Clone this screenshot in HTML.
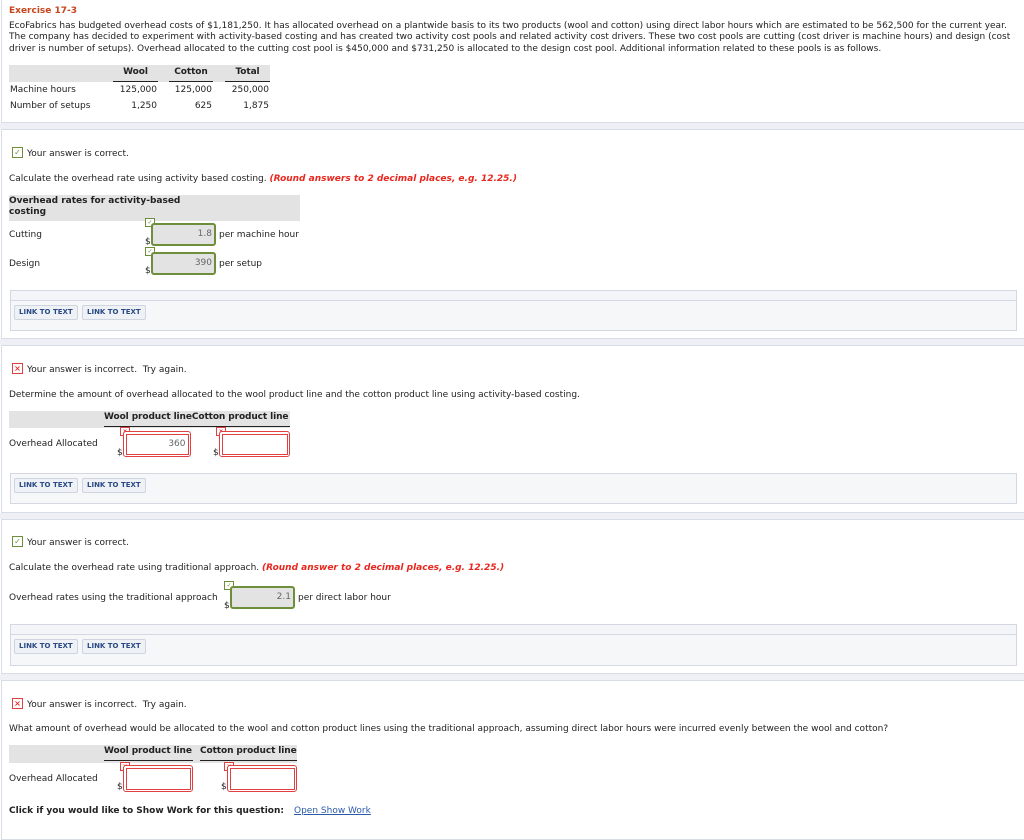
<!DOCTYPE html>
<html><head><meta charset="utf-8"><style>
*{margin:0;padding:0;box-sizing:border-box}
body{width:1024px;height:832px;background:#fff;position:relative;overflow:hidden;font-family:"DejaVu Sans","Liberation Sans",sans-serif;font-size:9px;color:#222}
.a{position:absolute;white-space:nowrap;margin-top:2px}
.panel{position:absolute;left:1px;width:1030px;border:1px solid #d8dce6;background:#fff}
.gap{position:absolute;left:0;width:1024px;background:#eef0f5}
.foot{position:absolute;left:10px;width:1007px;border:1px solid #d3d8e2;background:#f6f7f9}
.btn{position:absolute;height:15px;border:1px solid #cfd5df;border-radius:2px;background:#eef1f6;color:#2a4a85;font-weight:bold;font-size:7px;line-height:13px;padding:0 4px}
.b{font-weight:bold}
.hdr{position:absolute;background:#e3e3e3}
.ul{position:absolute;border-bottom:1.5px solid #222;font-weight:bold;white-space:nowrap;padding-top:2px;letter-spacing:-0.1px}
.gin{position:absolute;border:2px solid #6e8f3a;border-radius:3px;background:#e3e3e3;text-align:right;padding-right:2px;color:#666;line-height:19px}
.rin{position:absolute;border:1.5px solid #e04040;border-radius:3px;background:#fff;padding:1.5px}
.rin div{border:1px solid #e04040;width:100%;height:100%;text-align:right;padding-right:2px;color:#666;line-height:18px}
.ck{position:absolute;width:11px;height:11px;border:1px solid #6e8f3a;background:#fff;color:#6e8f3a;font-size:8px;line-height:9px;text-align:center}
.xk{position:absolute;width:11px;height:11px;border:1px solid #e04040;background:#fff;color:#e03030;font-size:8px;line-height:9px;text-align:center;font-weight:bold}
.red{color:#e8271e;font-weight:bold;font-style:italic}
</style></head><body>
<div class="panel" style="top:-1px;height:124px"></div>
<div class="gap" style="top:123px;height:6px"></div>
<div class="panel" style="top:129px;height:210px"></div>
<div class="gap" style="top:339px;height:6px"></div>
<div class="panel" style="top:345px;height:168px"></div>
<div class="gap" style="top:513px;height:6px"></div>
<div class="panel" style="top:519px;height:155px"></div>
<div class="gap" style="top:674px;height:6px"></div>
<div class="panel" style="top:680px;height:160px"></div>

<div class="a b" style="left:9px;top:4px;color:#c8441a;font-size:9px">Exercise 17-3</div>
<div class="a" style="left:9px;top:19px">EcoFabrics has budgeted overhead costs of $1,181,250. It has allocated overhead on a plantwide basis to its two products (wool and cotton) using direct labor hours which are estimated to be 562,500 for the current year.</div>
<div class="a" style="left:9px;top:30px">The company has decided to experiment with activity-based costing and has created two activity cost pools and related activity cost drivers. These two cost pools are cutting (cost driver is machine hours) and design (cost</div>
<div class="a" style="left:9px;top:42px">driver is number of setups). Overhead allocated to the cutting cost pool is $450,000 and $731,250 is allocated to the design cost pool. Additional information related to these pools is as follows.</div>

<div class="hdr" style="left:9px;top:65px;width:261px;height:17px"></div>
<div class="ul" style="left:113px;top:65px;width:45px;text-align:center;height:17px">Wool</div>
<div class="ul" style="left:169px;top:65px;width:44px;text-align:center;height:17px">Cotton</div>
<div class="ul" style="left:225px;top:65px;width:45px;text-align:center;height:17px">Total</div>
<div class="a" style="left:10px;top:83px">Machine hours</div>
<div class="a" style="left:113px;top:83px;width:44px;text-align:right">125,000</div>
<div class="a" style="left:169px;top:83px;width:43px;text-align:right">125,000</div>
<div class="a" style="left:225px;top:83px;width:44px;text-align:right">250,000</div>
<div class="a" style="left:10px;top:99px">Number of setups</div>
<div class="a" style="left:113px;top:99px;width:44px;text-align:right">1,250</div>
<div class="a" style="left:169px;top:99px;width:43px;text-align:right">625</div>
<div class="a" style="left:225px;top:99px;width:44px;text-align:right">1,875</div>

<!-- S2 -->
<div class="ck" style="left:12px;top:147px">✓</div>
<div class="a" style="left:27px;top:147px">Your answer is correct.</div>
<div class="a" style="left:9px;top:172px">Calculate the overhead rate using activity based costing. <span class="red">(Round answers to 2 decimal places, e.g. 12.25.)</span></div>
<div class="hdr" style="left:9px;top:195px;width:291px;height:26px"></div>
<div class="a b" style="left:9px;top:194px;line-height:11px">Overhead rates for activity-based<br>costing</div>
<div class="a" style="left:9px;top:228px">Cutting</div>
<div class="ck" style="left:145px;top:218px;width:10px;height:9px;font-size:6px;line-height:7px">✓</div>
<div class="a" style="left:145px;top:235px">$</div>
<div class="gin" style="left:151px;top:223px;width:65px;height:23px">1.8</div>
<div class="a" style="left:219px;top:228px">per machine hour</div>
<div class="a" style="left:9px;top:257px">Design</div>
<div class="ck" style="left:145px;top:247px;width:10px;height:9px;font-size:6px;line-height:7px">✓</div>
<div class="a" style="left:145px;top:264px">$</div>
<div class="gin" style="left:151px;top:252px;width:65px;height:23px">390</div>
<div class="a" style="left:219px;top:257px">per setup</div>
<div class="foot" style="top:290px;height:41px;border-top:1px solid #d3d8e2"><div style="height:10px;border-bottom:1px solid #d3d8e2;background:#f3f5f8"></div></div>
<div class="btn" style="left:14px;top:305px">LINK TO TEXT</div>
<div class="btn" style="left:82px;top:305px">LINK TO TEXT</div>

<!-- S3 -->
<div class="xk" style="left:12px;top:363px">×</div>
<div class="a" style="left:27px;top:363px">Your answer is incorrect.&nbsp; Try again.</div>
<div class="a" style="left:9px;top:388px">Determine the amount of overhead allocated to the wool product line and the cotton product line using activity-based costing.</div>
<div class="hdr" style="left:9px;top:411px;width:281px;height:17px"></div>
<div class="ul" style="left:104px;top:410px;width:186px;height:17px">Wool product lineCotton product line</div>
<div class="a" style="left:9px;top:437px">Overhead Allocated</div>
<div class="xk" style="left:120px;top:427px;width:10px;height:9px;font-size:6px;line-height:7px">×</div>
<div class="a" style="left:117px;top:446px">$</div>
<div class="rin" style="left:123px;top:431px;width:68px;height:26px"><div>360</div></div>
<div class="xk" style="left:216px;top:427px;width:10px;height:9px;font-size:6px;line-height:7px">×</div>
<div class="a" style="left:213px;top:446px">$</div>
<div class="rin" style="left:219px;top:431px;width:71px;height:26px"><div></div></div>
<div class="foot" style="top:473px;height:31px"></div>
<div class="btn" style="left:14px;top:478px">LINK TO TEXT</div>
<div class="btn" style="left:82px;top:478px">LINK TO TEXT</div>

<!-- S4 -->
<div class="ck" style="left:12px;top:536px">✓</div>
<div class="a" style="left:27px;top:536px">Your answer is correct.</div>
<div class="a" style="left:9px;top:561px">Calculate the overhead rate using traditional approach. <span class="red">(Round answer to 2 decimal places, e.g. 12.25.)</span></div>
<div class="a" style="left:9px;top:591px">Overhead rates using the traditional approach</div>
<div class="ck" style="left:224px;top:581px;width:10px;height:9px;font-size:6px;line-height:7px">✓</div>
<div class="a" style="left:224px;top:599px">$</div>
<div class="gin" style="left:230px;top:586px;width:65px;height:23px">2.1</div>
<div class="a" style="left:298px;top:591px">per direct labor hour</div>
<div class="foot" style="top:624px;height:42px"><div style="height:10px;border-bottom:1px solid #d3d8e2;background:#f3f5f8"></div></div>
<div class="btn" style="left:14px;top:639px">LINK TO TEXT</div>
<div class="btn" style="left:82px;top:639px">LINK TO TEXT</div>

<!-- S5 -->
<div class="xk" style="left:12px;top:698px">×</div>
<div class="a" style="left:27px;top:698px">Your answer is incorrect.&nbsp; Try again.</div>
<div class="a" style="left:9px;top:722px">What amount of overhead would be allocated to the wool and cotton product lines using the traditional approach, assuming direct labor hours were incurred evenly between the wool and cotton?</div>
<div class="hdr" style="left:9px;top:745px;width:288px;height:18px"></div>
<div class="ul" style="left:104px;top:744px;width:89px;height:17px">Wool product line</div>
<div class="ul" style="left:200px;top:744px;width:97px;height:17px">Cotton product line</div>
<div class="a" style="left:9px;top:772px">Overhead Allocated</div>
<div class="xk" style="left:120px;top:762px;width:10px;height:9px;font-size:6px;line-height:7px">×</div>
<div class="a" style="left:117px;top:780px">$</div>
<div class="rin" style="left:123px;top:765px;width:70px;height:27px"><div></div></div>
<div class="xk" style="left:224px;top:762px;width:10px;height:9px;font-size:6px;line-height:7px">×</div>
<div class="a" style="left:221px;top:780px">$</div>
<div class="rin" style="left:227px;top:765px;width:70px;height:27px"><div></div></div>
<div class="a b" style="left:9px;top:804px">Click if you would like to Show Work for this question:</div>
<div class="a" style="left:294px;top:804px;color:#2a5aa8;text-decoration:underline">Open Show Work</div>
</body></html>
